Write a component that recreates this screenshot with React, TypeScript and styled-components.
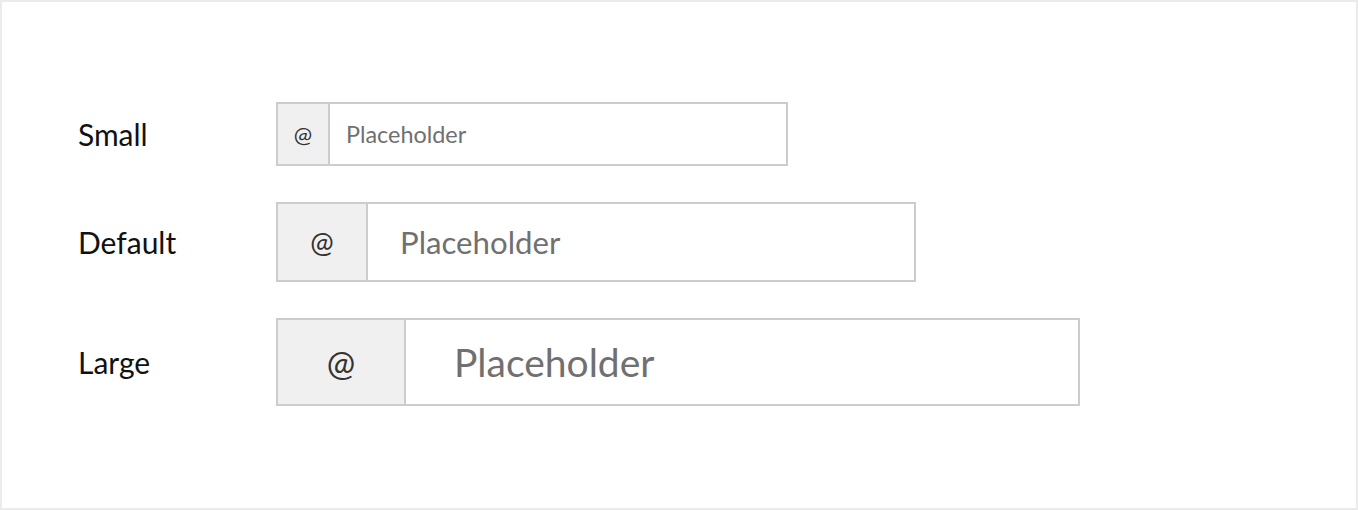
import React from "react";
import styled, { createGlobalStyle } from "styled-components";

const Global = createGlobalStyle`
  html, body { margin: 0; padding: 0; background: #ffffff; }
  * { box-sizing: border-box; }
`;

type Size = "small" | "default" | "large";

const sizes: Record<Size, { h: number; w: number; addon: number; font: number; pad: number; at: number }> = {
  small: { h: 64, w: 512, addon: 54, font: 23.4, pad: 16, at: 22 },
  default: { h: 80, w: 640, addon: 92, font: 31.2, pad: 32, at: 28 },
  large: { h: 88, w: 804, addon: 130, font: 39, pad: 48, at: 34 },
};

const Frame = styled.div`
  width: 1358px;
  height: 510px;
  border: 2px solid #ebebeb;
  background: #ffffff;
  padding: 100px 0 0 76px;
  font-family: Lato, "Liberation Sans", sans-serif;
`;

const Rows = styled.div`
  display: flex;
  flex-direction: column;
  gap: 36px;
`;

const Row = styled.div`
  display: flex;
  align-items: center;
`;

const Label = styled.div`
  width: 198px;
  font-size: 30px;
  color: #111111;
`;

const Group = styled.div<{ $size: Size }>`
  display: flex;
  width: ${(p) => sizes[p.$size].w}px;
  height: ${(p) => sizes[p.$size].h}px;
  border: 2px solid #cccccc;
  background: #ffffff;
`;

const Addon = styled.div<{ $size: Size }>`
  flex: none;
  width: ${(p) => sizes[p.$size].addon - 2}px;
  display: flex;
  align-items: center;
  justify-content: center;
  background: #f0f0f0;
  border-right: 2px solid #cccccc;
  color: #333333;
  font-size: ${(p) => sizes[p.$size].at}px;
`;

const Field = styled.input<{ $size: Size }>`
  flex: 1;
  min-width: 0;
  border: none;
  outline: none;
  background: transparent;
  padding: 0 0 0 ${(p) => sizes[p.$size].pad}px;
  font-family: Lato, "Liberation Sans", sans-serif;
  font-size: ${(p) => sizes[p.$size].font}px;
  color: #222222;
  &::placeholder {
    color: #707070;
    opacity: 1;
  }
`;

const items: { label: string; size: Size }[] = [
  { label: "Small", size: "small" },
  { label: "Default", size: "default" },
  { label: "Large", size: "large" },
];

export default function App() {
  return (
    <>
      <Global />
      <Frame>
        <Rows>
          {items.map((it) => (
            <Row key={it.size}>
              <Label>{it.label}</Label>
              <Group $size={it.size}>
                <Addon $size={it.size}>@</Addon>
                <Field $size={it.size} placeholder="Placeholder" />
              </Group>
            </Row>
          ))}
        </Rows>
      </Frame>
    </>
  );
}
